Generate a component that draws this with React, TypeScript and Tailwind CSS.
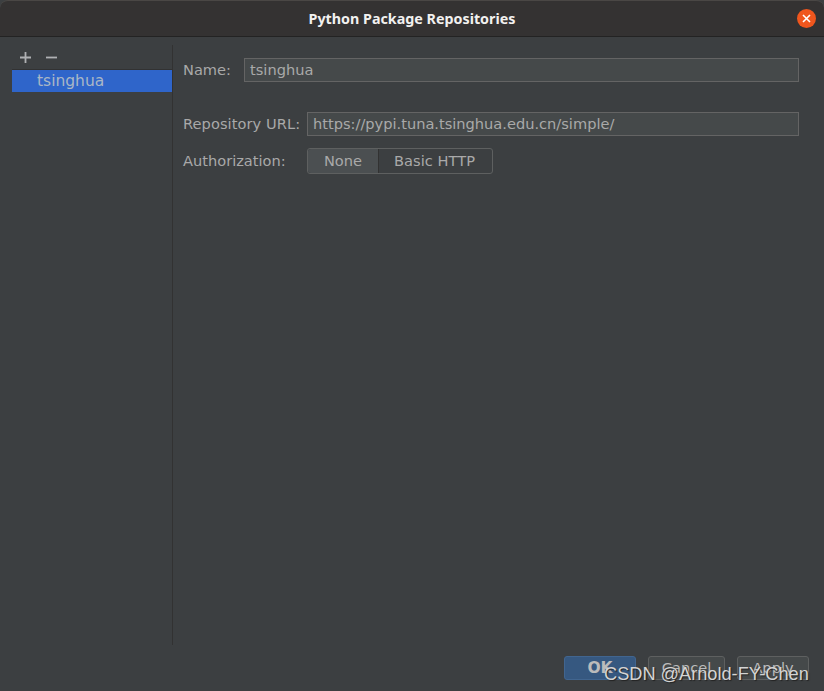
const deja = { fontFamily: '"DejaVu Sans", sans-serif' };

function FooterButton({ label, primary, width }: { label: string; primary?: boolean; width: string }) {
  return (
    <button
      className={`h-6 rounded-[3px] border ${width} ${
        primary
          ? 'border-[#41658f] bg-[#365880] text-[15.5px] font-bold text-[#bbbbbb]'
          : 'border-[#5e6060] bg-[#45494a] text-[14.6px] text-[#bbbbbb]'
      }`}
    >
      {label}
    </button>
  );
}

export default function App() {
  return (
    <div
      className="relative flex h-[691px] w-[824px] flex-col overflow-hidden bg-[#3c3f41] text-[14.6px] text-[#a9a9a9]"
      style={deja}
    >
      {/* Title bar */}
      <div className="relative flex h-[37px] shrink-0 items-center justify-center rounded-t-[8px] border-t border-b border-t-[#4a4745] border-b-[#232323] bg-[#343232]">
        <span
          className="text-[14.3px] font-bold text-[#f2f1f0]"
          style={{ fontFamily: '"Noto Sans", sans-serif' }}
        >
          Python Package Repositories
        </span>
        <div className="absolute right-[8px] top-[8px] flex h-[19px] w-[19px] items-center justify-center rounded-full bg-[#f0561d]">
          <svg width="11" height="11" viewBox="0 0 11 11">
            <path d="M2 2 L9 9 M9 2 L2 9" stroke="#ffffff" strokeWidth="1.6" />
          </svg>
        </div>
      </div>

      <div className="flex min-h-0 flex-1 pl-3">
        {/* Repo list */}
        <div className="mt-[8px] mb-[11px] flex w-[161px] shrink-0 flex-col border-r border-[#323232]">
          <div className="flex h-[24px] items-center gap-[15px] pl-[8px]">
            <svg width="11" height="11" viewBox="0 0 11 11">
              <path d="M5.5 0 V11 M0 5.5 H11" stroke="#afb1b3" strokeWidth="1.8" />
            </svg>
            <svg width="11" height="11" viewBox="0 0 11 11">
              <path d="M0 5.5 H11" stroke="#afb1b3" strokeWidth="1.8" />
            </svg>
          </div>
          <div className="flex h-[23px] w-[160px] items-center border-t border-[#323232] bg-[#2f65ca] pl-[25px] pt-[2px] text-[15.5px] text-[#a9b7c6]">
            tsinghua
          </div>
        </div>

        {/* Form */}
        <div className="flex flex-1 flex-col pt-[21px] pl-[10px] pr-[25px]">
          <div className="flex h-[24px] items-center">
            <span className="w-[61px]">Name:</span>
            <div className="flex h-[24px] flex-1 items-center border border-[#646464] bg-[#45494a] pl-[5px]">
              tsinghua
            </div>
          </div>
          <div className="mt-[30px] flex h-[24px] items-center">
            <span className="w-[124px] whitespace-nowrap tracking-[0.07px]">Repository URL:</span>
            <div className="flex h-[24px] flex-1 items-center border border-[#646464] bg-[#45494a] pl-[5px]">
              https://pypi.tuna.tsinghua.edu.cn/simple/
            </div>
          </div>
          <div className="mt-[12px] flex h-[26px] items-center">
            <span className="w-[124px]">Authorization:</span>
            <div className="flex h-[26px] rounded-[3px] border border-[#5e6060]">
              <div className="flex w-[71px] items-center justify-center rounded-l-[3px] border-r border-[#323232] bg-[#4b4f51]">
                None
              </div>
              <div className="flex w-[113px] items-center justify-center pr-[2px] tracking-[0.05px]">Basic HTTP</div>
            </div>
          </div>
        </div>
      </div>

      {/* Footer */}
      <div className="flex h-[35px] shrink-0 items-start justify-end gap-[12px] pr-[15px]">
        <FooterButton label="OK" primary width="w-[72px]" />
        <FooterButton label="Cancel" width="w-[77px]" />
        <FooterButton label="Apply" width="w-[72px]" />
      </div>

      {/* CSDN watermark over the buttons */}
      <span
        className="absolute left-[604px] top-[663px] whitespace-nowrap text-[18.2px] leading-[22px] text-[#d4d4d4] [text-shadow:1px_1px_1px_#222222]"
        style={{ fontFamily: '"Liberation Sans", sans-serif' }}
      >
        CSDN @Arnold-FY-Chen
      </span>
    </div>
  );
}
